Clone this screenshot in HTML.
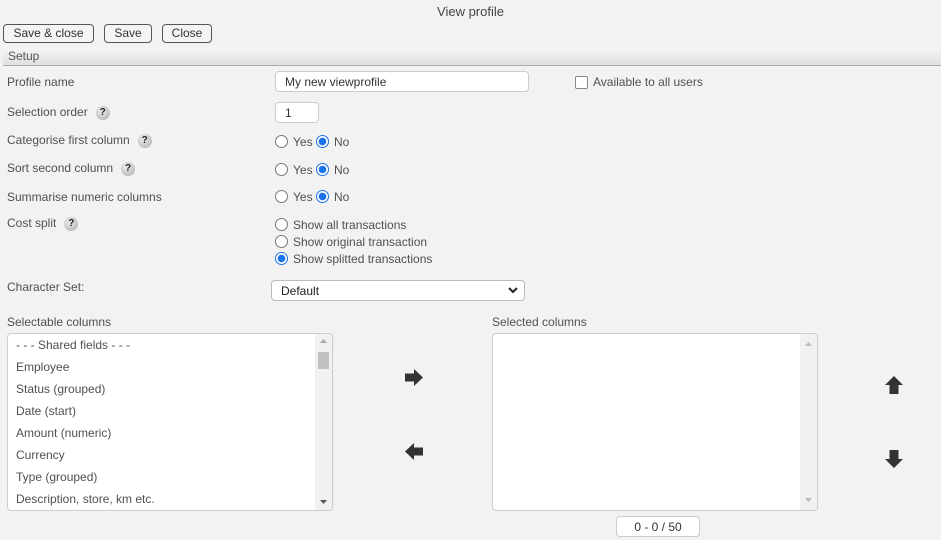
<!DOCTYPE html>
<html><head><style>
*{box-sizing:border-box;margin:0;padding:0}
body{width:941px;height:540px;overflow:hidden;background:#f2f2f2;font-family:"Liberation Sans",Verdana,sans-serif;font-size:12px;color:#505050;position:relative}
.a{position:absolute;white-space:nowrap}
.btn{position:absolute;top:24px;height:19px;border:1px solid #555;border-radius:4px;background:#f4f4f4;font-size:12px;line-height:17px;text-align:center;color:#333}
.q{display:inline-block;width:14px;height:14px;border-radius:50%;background:radial-gradient(circle at 40% 35%,#eee,#aaa);color:#222;font-weight:bold;font-size:10px;line-height:14px;text-align:center;vertical-align:middle;margin-left:8px}
.r{position:absolute;width:13px;height:13px;border:1px solid #777;border-radius:50%;background:#fff}
.r.on{border:1.5px solid #1a73e8;background:radial-gradient(circle,#1a73e8 3.5px,#fff 4px)}
.box{position:absolute;background:#fff;border:1px solid #ccc;border-radius:4px}
.li{position:absolute;left:8px}
</style></head><body>
<div class="a" style="left:0;top:0;width:941px;height:23px;text-align:center;line-height:23px;font-size:13px;color:#444">View profile</div>
<div class="btn" style="left:3px;width:91px">Save &amp; close</div>
<div class="btn" style="left:104px;width:48px">Save</div>
<div class="btn" style="left:162px;width:50px">Close</div>
<div class="a" style="left:3px;top:47px;width:938px;height:19px;background:linear-gradient(#f6f6f6,#e0e0e0);border-bottom:1px solid #aaa;padding-left:5px;line-height:18px;color:#555">Setup</div>

<div class="a" style="left:7px;top:75px">Profile name</div>
<div class="box" style="left:275px;top:71px;width:254px;height:21px;padding-left:9px;line-height:20px;color:#333">My new viewprofile</div>
<div class="a" style="left:575px;top:76px;width:13px;height:13px;border:1px solid #888;border-radius:2px;background:#fff"></div>
<div class="a" style="left:593px;top:75px">Available to all users</div>

<div class="a" style="left:7px;top:105px">Selection order<span class="q">?</span></div>
<div class="box" style="left:275px;top:102px;width:44px;height:21px;padding-left:9px;line-height:20px;color:#333">1</div>

<div class="a" style="left:7px;top:133px">Categorise first column<span class="q">?</span></div>
<div class="a" style="left:7px;top:161px">Sort second column<span class="q">?</span></div>
<div class="a" style="left:7px;top:190px">Summarise numeric columns</div>
<div class="a" style="left:7px;top:216px">Cost split<span class="q">?</span></div>

<div class="r" style="left:275px;top:135px"></div><div class="a" style="left:293px;top:135px">Yes</div><div class="r on" style="left:316px;top:135px"></div><div class="a" style="left:334px;top:135px">No</div>
<div class="r" style="left:275px;top:163px"></div><div class="a" style="left:293px;top:163px">Yes</div><div class="r on" style="left:316px;top:163px"></div><div class="a" style="left:334px;top:163px">No</div>
<div class="r" style="left:275px;top:190px"></div><div class="a" style="left:293px;top:190px">Yes</div><div class="r on" style="left:316px;top:190px"></div><div class="a" style="left:334px;top:190px">No</div>

<div class="r" style="left:275px;top:218px"></div><div class="a" style="left:293px;top:218px">Show all transactions</div>
<div class="r" style="left:275px;top:235px"></div><div class="a" style="left:293px;top:235px">Show original transaction</div>
<div class="r on" style="left:275px;top:252px"></div><div class="a" style="left:293px;top:252px">Show splitted transactions</div>

<div class="a" style="left:7px;top:280px">Character Set:</div>
<div class="box" style="left:271px;top:280px;width:254px;height:21px;padding-left:9px;line-height:20px;color:#222;border-color:#bbb">Default
<svg style="position:absolute;right:6px;top:6px" width="10" height="7" viewBox="0 0 10 7"><path d="M1 1l4 4 4-4" stroke="#222" stroke-width="2" fill="none"/></svg></div>

<div class="a" style="left:7px;top:315px">Selectable columns</div>
<div class="box" style="left:7px;top:333px;width:326px;height:178px;overflow:hidden">
<div class="li" style="top:4px">- - - Shared fields - - -</div>
<div class="li" style="top:26px">Employee</div>
<div class="li" style="top:48px">Status (grouped)</div>
<div class="li" style="top:70px">Date (start)</div>
<div class="li" style="top:92px">Amount (numeric)</div>
<div class="li" style="top:114px">Currency</div>
<div class="li" style="top:136px">Type (grouped)</div>
<div class="li" style="top:158px">Description, store, km etc.</div>
<div style="position:absolute;right:0;top:0;width:17px;height:176px;background:#f1f1f1"></div>
<div style="position:absolute;right:3px;top:18px;width:11px;height:17px;background:#c1c1c1"></div>
<svg style="position:absolute;right:5px;top:5px" width="7" height="4"><path d="M0 4L3.5 0 7 4z" fill="#aaa"/></svg>
<svg style="position:absolute;right:5px;bottom:6px" width="7" height="4"><path d="M0 0L3.5 4 7 0z" fill="#555"/></svg>
</div>

<svg class="a" style="left:405px;top:369px" width="18" height="17" viewBox="0 0 18 17"><path d="M0 4.5h9V0l9 8.5-9 8.5v-4.5H0z" fill="#333"/></svg>
<svg class="a" style="left:405px;top:443px" width="18" height="17" viewBox="0 0 18 17"><path d="M18 4.5H9V0L0 8.5 9 17v-4.5h9z" fill="#333"/></svg>

<div class="a" style="left:492px;top:315px">Selected columns</div>
<div class="box" style="left:492px;top:333px;width:326px;height:178px;overflow:hidden">
<div style="position:absolute;right:0;top:0;width:17px;height:176px;background:#f1f1f1"></div>
<svg style="position:absolute;right:5px;top:8px" width="7" height="4"><path d="M0 4L3.5 0 7 4z" fill="#bbb"/></svg>
<svg style="position:absolute;right:5px;bottom:8px" width="7" height="4"><path d="M0 0L3.5 4 7 0z" fill="#bbb"/></svg>
</div>
<svg class="a" style="left:885px;top:376px" width="18" height="18" viewBox="0 0 18 18"><path d="M4.5 18V9H0L9 0l9 9h-4.5v9z" fill="#333"/></svg>
<svg class="a" style="left:885px;top:450px" width="18" height="18" viewBox="0 0 18 18"><path d="M4.5 0v9H0l9 9 9-9h-4.5V0z" fill="#333"/></svg>
<div class="box" style="left:616px;top:516px;width:84px;height:21px;text-align:center;line-height:20px;color:#333">0 - 0 / 50</div>
</body></html>
